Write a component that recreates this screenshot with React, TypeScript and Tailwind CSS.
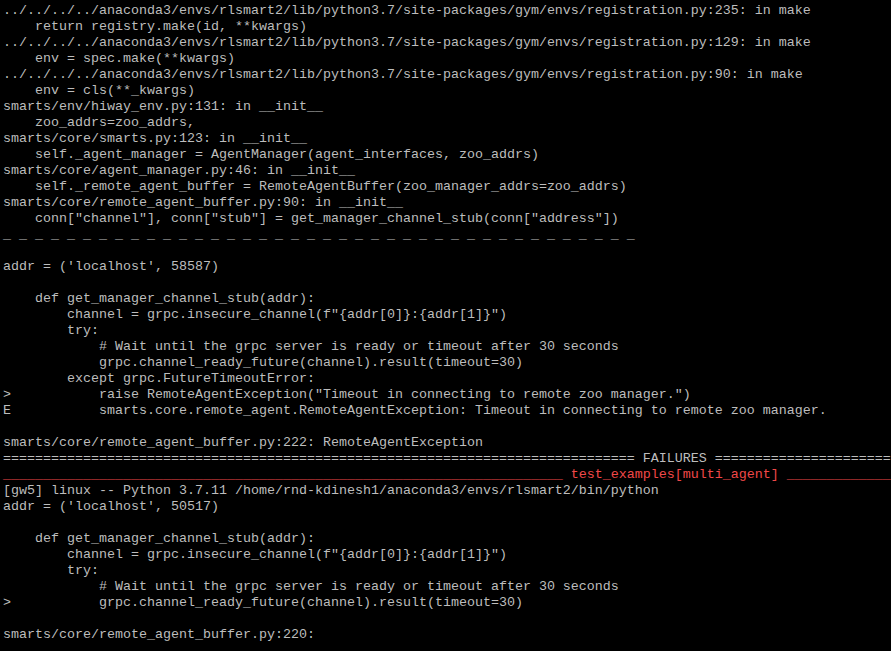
const lines: string[] = [
  "../../../../anaconda3/envs/rlsmart2/lib/python3.7/site-packages/gym/envs/registration.py:235: in make",
  "    return registry.make(id, **kwargs)",
  "../../../../anaconda3/envs/rlsmart2/lib/python3.7/site-packages/gym/envs/registration.py:129: in make",
  "    env = spec.make(**kwargs)",
  "../../../../anaconda3/envs/rlsmart2/lib/python3.7/site-packages/gym/envs/registration.py:90: in make",
  "    env = cls(**_kwargs)",
  "smarts/env/hiway_env.py:131: in __init__",
  "    zoo_addrs=zoo_addrs,",
  "smarts/core/smarts.py:123: in __init__",
  "    self._agent_manager = AgentManager(agent_interfaces, zoo_addrs)",
  "smarts/core/agent_manager.py:46: in __init__",
  "    self._remote_agent_buffer = RemoteAgentBuffer(zoo_manager_addrs=zoo_addrs)",
  "smarts/core/remote_agent_buffer.py:90: in __init__",
  '    conn["channel"], conn["stub"] = get_manager_channel_stub(conn["address"])',
  "_ ".repeat(40).trimEnd(),
  "",
  "addr = ('localhost', 58587)",
  "",
  "    def get_manager_channel_stub(addr):",
  '        channel = grpc.insecure_channel(f"{addr[0]}:{addr[1]}")',
  "        try:",
  "            # Wait until the grpc server is ready or timeout after 30 seconds",
  "            grpc.channel_ready_future(channel).result(timeout=30)",
  "        except grpc.FutureTimeoutError:",
  '>           raise RemoteAgentException("Timeout in connecting to remote zoo manager.")',
  "E           smarts.core.remote_agent.RemoteAgentException: Timeout in connecting to remote zoo manager.",
  "",
  "smarts/core/remote_agent_buffer.py:222: RemoteAgentException",
  "=".repeat(79) + " FAILURES " + "=".repeat(22),
];

const tail: string[] = [
  "[gw5] linux -- Python 3.7.11 /home/rnd-kdinesh1/anaconda3/envs/rlsmart2/bin/python",
  "addr = ('localhost', 50517)",
  "",
  "    def get_manager_channel_stub(addr):",
  '        channel = grpc.insecure_channel(f"{addr[0]}:{addr[1]}")',
  "        try:",
  "            # Wait until the grpc server is ready or timeout after 30 seconds",
  ">           grpc.channel_ready_future(channel).result(timeout=30)",
  "",
  "smarts/core/remote_agent_buffer.py:220:",
];

const Line = ({ text }: { text: string }) => (
  <div className="h-4 leading-4 whitespace-pre">{text || " "}</div>
);

export default function App() {
  return (
    <div
      className="w-[891px] h-[651px] overflow-hidden bg-black text-[#bdbdbd] text-[13.33px] pl-[3px] pt-[3px]"
      style={{ fontFamily: '"Liberation Mono", "Courier New", monospace' }}
    >
      {lines.map((l, i) => (
        <Line key={i} text={l} />
      ))}
      <div className="h-4 leading-4 whitespace-pre text-[#f04848]">
        {"_".repeat(70) + " test_examples[multi_agent] " + "_".repeat(13)}
      </div>
      {tail.map((l, i) => (
        <Line key={"t" + i} text={l} />
      ))}
    </div>
  );
}
